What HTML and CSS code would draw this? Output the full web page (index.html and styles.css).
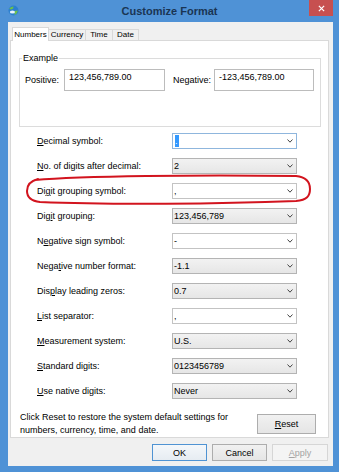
FILE: index.html
```html
<!DOCTYPE html>
<html lang="en">
<head>
<meta charset="utf-8">
<title>Customize Format</title>
<link rel="stylesheet" href="styles.css">
</head>
<body>
<div class="window">
  <div class="titlebar">
    <div class="tb-left">
      <svg class="app-icon" viewBox="0 0 11 11">
        <circle cx="5.5" cy="5.5" r="5" fill="#2b7fd0"/>
        <path d="M1.2 4 C2.5 2.2 4 1.5 5.5 1.6 L5.2 3.4 L3.2 4.6 Z" fill="#6cc04a"/>
        <path d="M6.5 6 L9.8 5.4 C9.6 7.6 8.4 9.2 6.6 9.9 Z" fill="#6cc04a"/>
        <ellipse cx="4.4" cy="7" rx="2.6" ry="1.6" fill="#e8f3fc"/>
      </svg>
    </div>
    <div class="title">Customize Format</div>
    <div class="tb-right">
      <div class="close">
        <svg viewBox="0 0 8 8" class="close-x"><path d="M1 1 L7 7 M7 1 L1 7" stroke="#fff" stroke-width="1.4" fill="none"/></svg>
      </div>
    </div>
  </div>

  <div class="client">
    <div class="tabs">
      <div class="tab active">Numbers</div>
      <div class="tab tab-currency">Currency</div>
      <div class="tab tab-time">Time</div>
      <div class="tab tab-date">Date</div>
    </div>

    <div class="panel">
      <div class="group">
        <span class="legend">Example</span>
        <div class="example-row">
          <span class="ex-label">Positive:</span>
          <div class="textbox tb-pos">123,456,789.00</div>
          <span class="ex-label ex-neg">Negative:</span>
          <div class="textbox tb-neg">-123,456,789.00</div>
        </div>
      </div>

      <div class="settings">
        <span class="lbl"><u>D</u>ecimal symbol:</span>
        <div class="combo edit focus"><span class="sel">.</span><svg class="chev" viewBox="0 0 6 4"><path d="M0.5 0.5 L3 3.2 L5.5 0.5"/></svg></div>

        <span class="lbl"><u>N</u>o. of digits after decimal:</span>
        <div class="combo list"><span>2</span><svg class="chev" viewBox="0 0 6 4"><path d="M0.5 0.5 L3 3.2 L5.5 0.5"/></svg></div>

        <span class="lbl">Di<u>g</u>it grouping symbol:</span>
        <div class="combo edit"><span>,</span><svg class="chev" viewBox="0 0 6 4"><path d="M0.5 0.5 L3 3.2 L5.5 0.5"/></svg></div>

        <span class="lbl">Dig<u>i</u>t grouping:</span>
        <div class="combo list"><span>123,456,789</span><svg class="chev" viewBox="0 0 6 4"><path d="M0.5 0.5 L3 3.2 L5.5 0.5"/></svg></div>

        <span class="lbl">N<u>e</u>gative sign symbol:</span>
        <div class="combo edit"><span>-</span><svg class="chev" viewBox="0 0 6 4"><path d="M0.5 0.5 L3 3.2 L5.5 0.5"/></svg></div>

        <span class="lbl">Nega<u>t</u>ive number format:</span>
        <div class="combo list"><span>-1.1</span><svg class="chev" viewBox="0 0 6 4"><path d="M0.5 0.5 L3 3.2 L5.5 0.5"/></svg></div>

        <span class="lbl">Dis<u>p</u>lay leading zeros:</span>
        <div class="combo list"><span>0.7</span><svg class="chev" viewBox="0 0 6 4"><path d="M0.5 0.5 L3 3.2 L5.5 0.5"/></svg></div>

        <span class="lbl"><u>L</u>ist separator:</span>
        <div class="combo edit"><span>,</span><svg class="chev" viewBox="0 0 6 4"><path d="M0.5 0.5 L3 3.2 L5.5 0.5"/></svg></div>

        <span class="lbl"><u>M</u>easurement system:</span>
        <div class="combo list"><span>U.S.</span><svg class="chev" viewBox="0 0 6 4"><path d="M0.5 0.5 L3 3.2 L5.5 0.5"/></svg></div>

        <span class="lbl"><u>S</u>tandard digits:</span>
        <div class="combo list"><span>0123456789</span><svg class="chev" viewBox="0 0 6 4"><path d="M0.5 0.5 L3 3.2 L5.5 0.5"/></svg></div>

        <span class="lbl"><u>U</u>se native digits:</span>
        <div class="combo list"><span>Never</span><svg class="chev" viewBox="0 0 6 4"><path d="M0.5 0.5 L3 3.2 L5.5 0.5"/></svg></div>
      </div>

      <div class="footer">
        <p class="note">Click Reset to restore the system default settings for<br>numbers, currency, time, and date.</p>
        <div class="btn reset"><u>R</u>eset</div>
      </div>
    </div>

    <div class="buttons">
      <div class="btn default">OK</div>
      <div class="btn">Cancel</div>
      <div class="btn disabled"><u>A</u>pply</div>
    </div>
  </div>

  <svg class="annotation" viewBox="0 0 339 472">
    <path d="M35 180 C80 176 200 174.5 296 176 C306 177 310 182 310 189 C310 196 307 200 296 201 C220 204 110 205 40 202 C31 201 27 197 27 191 C27 185 30 181 38 179" fill="none" stroke="#d2141e" stroke-width="2" stroke-linecap="round"/>
  </svg>
</div>
</body>
</html>
```

FILE: styles.css
```css
html, body {
  margin: 0;
  padding: 0;
}

body {
  width: 339px;
  height: 472px;
  overflow: hidden;
  background: #4f92d6;
  font-family: "Liberation Sans", Arial, sans-serif;
  font-size: 9px;
  color: #000;
}

.window {
  position: relative;
  width: 339px;
  height: 472px;
  display: flex;
  flex-direction: column;
}

/* ---------- title bar ---------- */
.titlebar {
  flex: none;
  height: 22px;
  display: grid;
  grid-template-columns: 1fr auto 1fr;
  align-items: start;
}

.tb-left {
  padding: 5px 0 0 8px;
}

.app-icon {
  display: block;
  width: 11px;
  height: 11px;
}

.title {
  font-size: 11px;
  font-weight: bold;
  line-height: 23px;
  color: #1a3553;
}

.tb-right {
  display: flex;
  justify-content: flex-end;
  padding-right: 6px;
}

.close {
  width: 24px;
  height: 16px;
  background: #c75050;
  display: flex;
  align-items: center;
  justify-content: center;
}

.close-x {
  width: 7px;
  height: 7px;
  display: block;
}

/* ---------- client area ---------- */
.client {
  flex: none;
  height: 444px;
  box-sizing: border-box;
  margin: 0 6px 0 8px;
  padding: 5px 4px 5px 2px;
  background: #f0f0f0;
  display: flex;
  flex-direction: column;
}

/* ---------- tabs ---------- */
.tabs {
  flex: none;
  height: 13px;
  display: flex;
  align-items: flex-end;
  padding-left: 2px;
}

.tab {
  box-sizing: border-box;
  height: 11px;
  border: 1px solid #d9d9d9;
  border-bottom: none;
  background: #f0f0f0;
  font-size: 8px;
  line-height: 10px;
  text-align: center;
  margin-left: -1px;
}

.tab.active {
  position: relative;
  z-index: 1;
  width: 37px;
  height: 14px;
  margin-bottom: -1px;
  margin-left: 0;
  background: #fff;
  line-height: 13px;
}

.tab-currency { width: 38px; }
.tab-time { width: 28px; }
.tab-date { width: 27px; }

/* ---------- panel ---------- */
.panel {
  flex: none;
  border: 1px solid #d9d9d9;
  background: #fff;
  display: flex;
  flex-direction: column;
}

.group {
  position: relative;
  box-sizing: border-box;
  height: 69px;
  margin: 17px 7px 0 8px;
  border: 1px solid #dcdcdc;
  padding: 10px 0 0 5px;
}

.legend {
  position: absolute;
  top: -6px;
  left: 2px;
  padding: 0 1px;
  background: #fff;
  line-height: 11px;
}

.example-row {
  display: flex;
  align-items: center;
}

.ex-label {
  width: 39px;
}

.ex-neg {
  width: 41px;
  margin-left: 8px;
}

.textbox {
  box-sizing: border-box;
  height: 22px;
  border: 1px solid #bcbcbc;
  padding: 2px 4px 0;
  line-height: 11px;
  background: #fff;
}

.tb-pos { width: 101px; }
.tb-neg { width: 100px; }

/* ---------- settings grid ---------- */
.settings {
  display: grid;
  grid-template-columns: 135px 125px;
  row-gap: 9px;
  margin-top: 6px;
  padding-left: 26px;
}

.lbl {
  line-height: 16px;
  white-space: nowrap;
}

.combo {
  box-sizing: border-box;
  height: 16px;
  display: flex;
  align-items: center;
  justify-content: space-between;
  padding: 0 3px 0 1px;
  border: 1px solid #c3c3c3;
  line-height: 14px;
}

.combo.edit {
  background: #fff;
}

.combo.list {
  background: linear-gradient(#f2f2f2, #e6e6e6);
  border-color: #b4b4b4;
}

.combo.focus {
  border-color: #8fb6dd;
}

.sel {
  display: inline-block;
  width: 4px;
  height: 12px;
  background: #3399ff;
  color: #fff;
  line-height: 12px;
  margin-left: 1px;
}

.chev {
  width: 6px;
  height: 4px;
  display: block;
}

.chev path {
  fill: none;
  stroke: #444;
  stroke-width: 1;
}

/* ---------- footer inside panel ---------- */
.footer {
  height: 26px;
  margin-top: 12px;
  padding: 0 12px 0 9px;
  display: flex;
  align-items: center;
  justify-content: space-between;
}

.note {
  margin: 0;
  line-height: 13px;
}

/* ---------- buttons ---------- */
.btn {
  box-sizing: border-box;
  height: 17px;
  width: 55px;
  border: 1px solid #adadad;
  background: linear-gradient(#f1f1f1, #e5e5e5);
  display: flex;
  align-items: center;
  justify-content: center;
}

.btn.reset {
  width: 59px;
  height: 20px;
}

.buttons {
  flex: none;
  margin-top: 6px;
  padding-right: 1px;
  display: flex;
  justify-content: flex-end;
  gap: 5px;
}

.btn.default {
  border-color: #4f93d3;
  background: linear-gradient(#f4f7fa, #e6ecf2);
}

.btn.disabled {
  width: 56px;
  border-color: #d6d6d6;
  background: #f4f4f4;
  color: #a3a3a3;
}

/* ---------- hand-drawn highlight ---------- */
.annotation {
  position: absolute;
  left: 0;
  top: 0;
  width: 339px;
  height: 472px;
  pointer-events: none;
}
```
